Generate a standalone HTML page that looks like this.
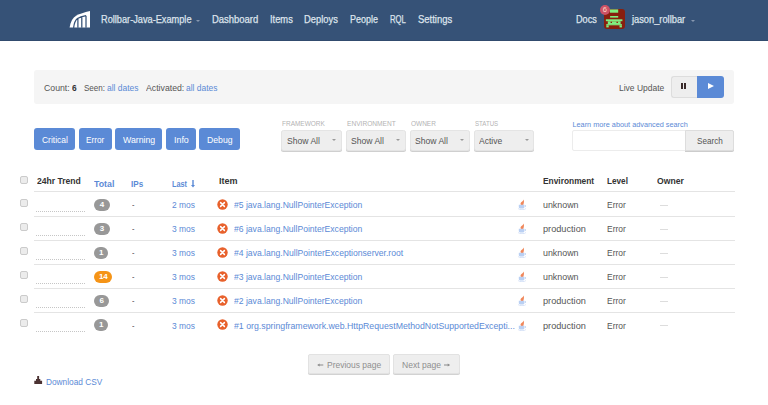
<!DOCTYPE html>
<html><head><meta charset="utf-8">
<style>
html,body{margin:0;padding:0;width:768px;height:405px;overflow:hidden;background:#fff;}
body{font-family:"Liberation Sans",sans-serif;font-size:9.5px;color:#555;position:relative;}
.t{position:absolute;white-space:nowrap;transform-origin:0 0;-webkit-text-stroke:0px;}
.nav{position:absolute;left:0;top:0;width:768px;height:40px;background:#365277;border-bottom:1px solid #314b6e;}
.caret{position:absolute;width:0;height:0;border-left:2.6px solid transparent;border-right:2.6px solid transparent;border-top:2.6px solid #8797b0;}
.bar{position:absolute;left:33.5px;top:70px;width:700.5px;height:33.7px;background:#f5f5f5;border-radius:3px;}
.btn{position:absolute;top:128.3px;height:21.3px;background:#5b8ad6;border-radius:3px;}
.dd{position:absolute;top:130px;width:60.3px;height:21px;background:#eee;border:1px solid #e4e4e4;border-radius:2.5px;box-sizing:border-box;box-shadow:0 1px 0 #cfcfcf;}
.dd i{position:absolute;left:49.5px;top:7.8px;width:0;height:0;border-left:2.6px solid transparent;border-right:2.6px solid transparent;border-top:2.6px solid #999;}
.hl{position:absolute;left:33.5px;width:701px;height:1px;background:#e4e4e4;}
.cb{position:absolute;left:20px;width:6px;height:6px;border:1px solid #cbcbcb;background:#ececec;border-radius:2px;}
.tr{position:absolute;left:36.3px;width:48.7px;height:1px;border-top:1px dotted #c6c6c6;}
.bd{position:absolute;height:11.7px;border-radius:6px;color:#fff;font-size:8px;line-height:12px;text-align:center;font-weight:bold;letter-spacing:-0.2px;}
.ei{position:absolute;left:217px;width:11px;height:11px;}
.ji{position:absolute;left:514px;width:16px;height:16px;}
.dash{position:absolute;left:660px;width:8px;height:1px;background:#ddd;}
</style></head><body>
<div class="nav"></div>
<!-- logo -->
<svg style="position:absolute;left:66px;top:8px" width="30" height="24" viewBox="0 0 30 24">
<path d="M3.6 19.6 C4.4 14 6.5 9.8 10.5 7.5 C13.5 5.8 18 4.4 24 3 L24 19.6 Z" fill="#fff"/>
<path d="M7.6 19.8 C8.2 15 9.3 12.3 11.5 10.6 C14 8.9 17 8.2 20 7.7 M20 7.7 V19.8 M15.8 8.8 V19.8 M11.9 10.8 V19.8" stroke="#365277" stroke-width="1.25" fill="none"/>
</svg>
<div class="caret" style="left:196px;top:19.5px"></div>
<div class="caret" style="left:690.5px;top:19.5px"></div>
<!-- avatar -->
<div style="position:absolute;left:604px;top:9px;width:20.5px;height:20px;background:#881f0e;border-radius:3px"></div>
<svg style="position:absolute;left:604px;top:9px" width="21" height="20" viewBox="0 0 21 20">
<g fill="#80ef80">
<rect x="6" y="0.4" width="8.2" height="3.3"/>
<rect x="6.1" y="7" width="8.1" height="1.6"/>
<rect x="1.9" y="10.3" width="16.5" height="1.9"/>
<path d="M3.8 12.2H16.6V15.1H3.8Z M6.6 12.7V14.1H8V12.7Z M12.5 12.7V14.1H13.9V12.7Z" fill-rule="evenodd"/>
<rect x="2.3" y="15.1" width="15.6" height="1.2"/>
<rect x="2.3" y="16.3" width="2.4" height="2.1"/>
<rect x="15.5" y="16.3" width="2.4" height="2.1"/>
</g>
</svg>
<div style="position:absolute;left:599.6px;top:4.9px;width:10.5px;height:10.5px;border-radius:50%;background:#cd5266;color:#fcdcc6;font-size:7.5px;line-height:10.5px;text-align:center">6</div>

<!-- count bar -->
<div class="bar"></div>
<div style="position:absolute;left:671.3px;top:76.4px;width:25.7px;height:21.4px;background:#eee;border:1px solid #ddd;border-right:none;border-radius:3px 0 0 3px;box-sizing:border-box"></div>
<div style="position:absolute;left:681.2px;top:83.2px;width:2px;height:6px;background:#3a2a2a"></div>
<div style="position:absolute;left:684.4px;top:83.2px;width:2px;height:6px;background:#3a2a2a"></div>
<div style="position:absolute;left:697px;top:76.4px;width:26.8px;height:21.4px;background:#5b8ad6;border-radius:0 3px 3px 0"></div>
<div style="position:absolute;left:708px;top:83px;width:0;height:0;border-top:3.6px solid transparent;border-bottom:3.6px solid transparent;border-left:6.8px solid #fff"></div>

<!-- level buttons -->
<div class="btn" style="left:34px;width:40.7px"></div>
<div class="btn" style="left:78.7px;width:33px"></div>
<div class="btn" style="left:115.1px;width:47.4px"></div>
<div class="btn" style="left:166px;width:29.7px"></div>
<div class="btn" style="left:199.3px;width:41px"></div>

<!-- dropdowns -->
<div class="dd" style="left:281.3px"><i></i></div>
<div class="dd" style="left:345.6px"><i></i></div>
<div class="dd" style="left:409.7px"><i></i></div>
<div class="dd" style="left:474px"><i></i></div>

<!-- search -->
<div style="position:absolute;left:572.3px;top:130.2px;width:113.5px;height:21.3px;border:1px solid #ececec;background:#fff;box-sizing:border-box;border-radius:2px 0 0 2px"></div>
<div style="position:absolute;left:685.3px;top:130.2px;width:48.7px;height:21.3px;border:1px solid #ddd;background:#eee;box-sizing:border-box;border-radius:0 2px 2px 0;box-shadow:0 1px 0 #ccc"></div>

<!-- table header -->
<div class="cb" style="top:176.2px"></div>
<svg style="position:absolute;left:190.8px;top:179.5px" width="4" height="8" viewBox="0 0 4 8"><path d="M1.3 0H2.7V5H4L2 7.6L0 5H1.3Z" fill="#5b8ad6"/></svg>
<div class="hl" style="top:191.3px"></div>
<div class="cb" style="top:198.80px"></div>
<div class="tr" style="top:210.60px"></div>
<div class="bd" style="left:93.8px;top:198.90px;width:16.2px;background:#989898">4</div>
<svg class="ei" style="top:198.90px" viewBox="0 0 11 11"><circle cx="5.5" cy="5.5" r="5.2" fill="#e8612c"/><path d="M3.6 3.6L7.4 7.4M7.4 3.6L3.6 7.4" stroke="#fff" stroke-width="1.5" stroke-linecap="round"/></svg>
<svg class="ji" style="top:197.00px" viewBox="0 0 16 16"><path d="M9.3 2.4C10 3.5 10.2 4.5 9.8 5.8C9.6 7 9.6 7.5 9.2 8L7 8C6.3 7.2 6.3 5.8 7.5 5C8.5 4.3 9.3 3.5 9.3 2.4Z" fill="#f08659"/><path d="M4.8 7.8H10.4V10C10.4 11 9.5 11.6 7.6 11.6C5.7 11.6 4.8 11 4.8 10Z M10.9 8.2h1.1v1.6h-1.1z" fill="#bad0f3"/><path d="M4 11.3C5.5 12.5 10.5 12.5 12 11.3L12 12C10.5 13 5.5 13 4 12Z" fill="#c6d7f4"/></svg>
<div class="dash" style="top:204.50px"></div>
<div class="hl" style="top:215.60px"></div>
<div class="cb" style="top:222.90px"></div>
<div class="tr" style="top:234.70px"></div>
<div class="bd" style="left:93.8px;top:223.00px;width:16.2px;background:#989898">3</div>
<svg class="ei" style="top:223.00px" viewBox="0 0 11 11"><circle cx="5.5" cy="5.5" r="5.2" fill="#e8612c"/><path d="M3.6 3.6L7.4 7.4M7.4 3.6L3.6 7.4" stroke="#fff" stroke-width="1.5" stroke-linecap="round"/></svg>
<svg class="ji" style="top:221.10px" viewBox="0 0 16 16"><path d="M9.3 2.4C10 3.5 10.2 4.5 9.8 5.8C9.6 7 9.6 7.5 9.2 8L7 8C6.3 7.2 6.3 5.8 7.5 5C8.5 4.3 9.3 3.5 9.3 2.4Z" fill="#f08659"/><path d="M4.8 7.8H10.4V10C10.4 11 9.5 11.6 7.6 11.6C5.7 11.6 4.8 11 4.8 10Z M10.9 8.2h1.1v1.6h-1.1z" fill="#bad0f3"/><path d="M4 11.3C5.5 12.5 10.5 12.5 12 11.3L12 12C10.5 13 5.5 13 4 12Z" fill="#c6d7f4"/></svg>
<div class="dash" style="top:228.60px"></div>
<div class="hl" style="top:239.70px"></div>
<div class="cb" style="top:247.00px"></div>
<div class="tr" style="top:258.80px"></div>
<div class="bd" style="left:93.8px;top:247.10px;width:14.7px;background:#989898">1</div>
<svg class="ei" style="top:247.10px" viewBox="0 0 11 11"><circle cx="5.5" cy="5.5" r="5.2" fill="#e8612c"/><path d="M3.6 3.6L7.4 7.4M7.4 3.6L3.6 7.4" stroke="#fff" stroke-width="1.5" stroke-linecap="round"/></svg>
<svg class="ji" style="top:245.20px" viewBox="0 0 16 16"><path d="M9.3 2.4C10 3.5 10.2 4.5 9.8 5.8C9.6 7 9.6 7.5 9.2 8L7 8C6.3 7.2 6.3 5.8 7.5 5C8.5 4.3 9.3 3.5 9.3 2.4Z" fill="#f08659"/><path d="M4.8 7.8H10.4V10C10.4 11 9.5 11.6 7.6 11.6C5.7 11.6 4.8 11 4.8 10Z M10.9 8.2h1.1v1.6h-1.1z" fill="#bad0f3"/><path d="M4 11.3C5.5 12.5 10.5 12.5 12 11.3L12 12C10.5 13 5.5 13 4 12Z" fill="#c6d7f4"/></svg>
<div class="dash" style="top:252.70px"></div>
<div class="hl" style="top:263.80px"></div>
<div class="cb" style="top:271.10px"></div>
<div class="tr" style="top:282.90px"></div>
<div class="bd" style="left:93.8px;top:271.20px;width:18.7px;background:#f59417">14</div>
<svg class="ei" style="top:271.20px" viewBox="0 0 11 11"><circle cx="5.5" cy="5.5" r="5.2" fill="#e8612c"/><path d="M3.6 3.6L7.4 7.4M7.4 3.6L3.6 7.4" stroke="#fff" stroke-width="1.5" stroke-linecap="round"/></svg>
<svg class="ji" style="top:269.30px" viewBox="0 0 16 16"><path d="M9.3 2.4C10 3.5 10.2 4.5 9.8 5.8C9.6 7 9.6 7.5 9.2 8L7 8C6.3 7.2 6.3 5.8 7.5 5C8.5 4.3 9.3 3.5 9.3 2.4Z" fill="#f08659"/><path d="M4.8 7.8H10.4V10C10.4 11 9.5 11.6 7.6 11.6C5.7 11.6 4.8 11 4.8 10Z M10.9 8.2h1.1v1.6h-1.1z" fill="#bad0f3"/><path d="M4 11.3C5.5 12.5 10.5 12.5 12 11.3L12 12C10.5 13 5.5 13 4 12Z" fill="#c6d7f4"/></svg>
<div class="dash" style="top:276.80px"></div>
<div class="hl" style="top:287.90px"></div>
<div class="cb" style="top:295.20px"></div>
<div class="tr" style="top:307.00px"></div>
<div class="bd" style="left:93.8px;top:295.30px;width:15.6px;background:#989898">6</div>
<svg class="ei" style="top:295.30px" viewBox="0 0 11 11"><circle cx="5.5" cy="5.5" r="5.2" fill="#e8612c"/><path d="M3.6 3.6L7.4 7.4M7.4 3.6L3.6 7.4" stroke="#fff" stroke-width="1.5" stroke-linecap="round"/></svg>
<svg class="ji" style="top:293.40px" viewBox="0 0 16 16"><path d="M9.3 2.4C10 3.5 10.2 4.5 9.8 5.8C9.6 7 9.6 7.5 9.2 8L7 8C6.3 7.2 6.3 5.8 7.5 5C8.5 4.3 9.3 3.5 9.3 2.4Z" fill="#f08659"/><path d="M4.8 7.8H10.4V10C10.4 11 9.5 11.6 7.6 11.6C5.7 11.6 4.8 11 4.8 10Z M10.9 8.2h1.1v1.6h-1.1z" fill="#bad0f3"/><path d="M4 11.3C5.5 12.5 10.5 12.5 12 11.3L12 12C10.5 13 5.5 13 4 12Z" fill="#c6d7f4"/></svg>
<div class="dash" style="top:300.90px"></div>
<div class="hl" style="top:312.00px"></div>
<div class="cb" style="top:319.30px"></div>
<div class="tr" style="top:331.10px"></div>
<div class="bd" style="left:93.8px;top:319.40px;width:14.7px;background:#989898">1</div>
<svg class="ei" style="top:319.40px" viewBox="0 0 11 11"><circle cx="5.5" cy="5.5" r="5.2" fill="#e8612c"/><path d="M3.6 3.6L7.4 7.4M7.4 3.6L3.6 7.4" stroke="#fff" stroke-width="1.5" stroke-linecap="round"/></svg>
<svg class="ji" style="top:317.50px" viewBox="0 0 16 16"><path d="M9.3 2.4C10 3.5 10.2 4.5 9.8 5.8C9.6 7 9.6 7.5 9.2 8L7 8C6.3 7.2 6.3 5.8 7.5 5C8.5 4.3 9.3 3.5 9.3 2.4Z" fill="#f08659"/><path d="M4.8 7.8H10.4V10C10.4 11 9.5 11.6 7.6 11.6C5.7 11.6 4.8 11 4.8 10Z M10.9 8.2h1.1v1.6h-1.1z" fill="#bad0f3"/><path d="M4 11.3C5.5 12.5 10.5 12.5 12 11.3L12 12C10.5 13 5.5 13 4 12Z" fill="#c6d7f4"/></svg>
<div class="dash" style="top:325.00px"></div>

<!-- pagination -->
<div style="position:absolute;left:308.4px;top:354.2px;width:81.2px;height:20px;background:#eee;border:1px solid #e2e2e2;box-sizing:border-box;border-radius:2px;box-shadow:0 1px 0 #d2d2d2"></div>
<svg style="position:absolute;left:317px;top:362.4px" width="7" height="6" viewBox="0 0 7 6"><path d="M0.2 3L2.6 1.5V2.5H6.3V3.5H2.6V4.5Z" fill="#8a8a8a"/></svg>
<div style="position:absolute;left:393px;top:354.2px;width:66.8px;height:20px;background:#eee;border:1px solid #e2e2e2;box-sizing:border-box;border-radius:2px;box-shadow:0 1px 0 #d2d2d2"></div>
<svg style="position:absolute;left:444.2px;top:362.2px" width="7" height="6" viewBox="0 0 7 6"><path d="M6.1 3L3.7 1.5V2.5H0V3.5H3.7V4.5Z" fill="#8a8a8a"/></svg>

<!-- download -->
<svg style="position:absolute;left:34px;top:375px" width="9" height="10" viewBox="0 0 9 10"><path d="M3.2 0.9H5.1V3.9H6.3V5.7H2V3.9H3.2Z M0.3 5.8H8.1V8.9H0.3Z" fill="#4b3232"/></svg>
<span class="t" style="left:100.70px;top:13.73px;font-size:10px;line-height:12px;color:#dde3ec;transform:scaleX(0.920);-webkit-text-stroke:0.25px;">Rollbar-Java-Example</span>
<span class="t" style="left:212.40px;top:13.73px;font-size:10px;line-height:12px;color:#dde3ec;transform:scaleX(0.945);-webkit-text-stroke:0.25px;">Dashboard</span>
<span class="t" style="left:270.00px;top:13.73px;font-size:10px;line-height:12px;color:#dde3ec;transform:scaleX(0.933);-webkit-text-stroke:0.25px;">Items</span>
<span class="t" style="left:304.20px;top:13.73px;font-size:10px;line-height:12px;color:#dde3ec;transform:scaleX(0.936);-webkit-text-stroke:0.25px;">Deploys</span>
<span class="t" style="left:349.50px;top:13.73px;font-size:10px;line-height:12px;color:#dde3ec;transform:scaleX(0.896);-webkit-text-stroke:0.25px;">People</span>
<span class="t" style="left:389.50px;top:13.73px;font-size:10px;line-height:12px;color:#dde3ec;transform:scaleX(0.771);-webkit-text-stroke:0.25px;">RQL</span>
<span class="t" style="left:417.80px;top:13.73px;font-size:10px;line-height:12px;color:#dde3ec;transform:scaleX(0.947);-webkit-text-stroke:0.25px;">Settings</span>
<span class="t" style="left:576.00px;top:13.73px;font-size:10px;line-height:12px;color:#dde3ec;transform:scaleX(0.913);-webkit-text-stroke:0.25px;">Docs</span>
<span class="t" style="left:632.33px;top:13.73px;font-size:10px;line-height:12px;color:#dde3ec;transform:scaleX(0.928);-webkit-text-stroke:0.25px;">jason_rollbar</span>
<span class="t" style="left:43.90px;top:81.91px;font-size:9.5px;line-height:11px;color:#555;transform:scaleX(0.918);">Count:</span>
<span class="t" style="left:71.90px;top:81.91px;font-size:9.5px;line-height:11px;color:#333;font-weight:bold;transform:scaleX(0.880);">6</span>
<span class="t" style="left:83.80px;top:81.91px;font-size:9.5px;line-height:11px;color:#555;transform:scaleX(0.848);">Seen:</span>
<span class="t" style="left:106.50px;top:81.91px;font-size:9.5px;line-height:11px;color:#5b8ad6;transform:scaleX(0.890);">all dates</span>
<span class="t" style="left:145.50px;top:81.91px;font-size:9.5px;line-height:11px;color:#555;transform:scaleX(0.918);">Activated:</span>
<span class="t" style="left:185.90px;top:81.91px;font-size:9.5px;line-height:11px;color:#5b8ad6;transform:scaleX(0.887);">all dates</span>
<span class="t" style="left:618.60px;top:82.01px;font-size:9.5px;line-height:11px;color:#555;transform:scaleX(0.893);">Live Update</span>
<span class="t" style="left:41.50px;top:133.91px;font-size:9.5px;line-height:11px;color:#fff;transform:scaleX(0.889);">Critical</span>
<span class="t" style="left:86.00px;top:133.91px;font-size:9.5px;line-height:11px;color:#fff;transform:scaleX(0.864);">Error</span>
<span class="t" style="left:122.90px;top:133.91px;font-size:9.5px;line-height:11px;color:#fff;transform:scaleX(0.918);">Warning</span>
<span class="t" style="left:173.70px;top:133.91px;font-size:9.5px;line-height:11px;color:#fff;transform:scaleX(0.932);">Info</span>
<span class="t" style="left:207.20px;top:133.91px;font-size:9.5px;line-height:11px;color:#fff;transform:scaleX(0.913);">Debug</span>
<span class="t" style="left:282.30px;top:119.77px;font-size:7px;line-height:8px;color:#b3b3b3;transform:scaleX(0.925);">FRAMEWORK</span>
<span class="t" style="left:346.50px;top:119.77px;font-size:7px;line-height:8px;color:#b3b3b3;transform:scaleX(0.944);">ENVIRONMENT</span>
<span class="t" style="left:410.60px;top:119.77px;font-size:7px;line-height:8px;color:#b3b3b3;transform:scaleX(0.926);">OWNER</span>
<span class="t" style="left:474.80px;top:119.77px;font-size:7px;line-height:8px;color:#b3b3b3;transform:scaleX(0.870);">STATUS</span>
<span class="t" style="left:286.90px;top:135.01px;font-size:9.5px;line-height:11px;color:#555;transform:scaleX(0.904);">Show All</span>
<span class="t" style="left:351.10px;top:135.01px;font-size:9.5px;line-height:11px;color:#555;transform:scaleX(0.904);">Show All</span>
<span class="t" style="left:415.30px;top:135.01px;font-size:9.5px;line-height:11px;color:#555;transform:scaleX(0.904);">Show All</span>
<span class="t" style="left:479.10px;top:135.01px;font-size:9.5px;line-height:11px;color:#555;transform:scaleX(0.899);">Active</span>
<span class="t" style="left:572.50px;top:119.77px;font-size:7.3px;line-height:9px;color:#5b8ad6;">Learn more about advanced search</span>
<span class="t" style="left:696.70px;top:135.11px;font-size:9.5px;line-height:11px;color:#555;transform:scaleX(0.855);">Search</span>
<span class="t" style="left:36.90px;top:174.81px;font-size:9.5px;line-height:11px;color:#333;font-weight:bold;transform:scaleX(0.902);">24hr Trend</span>
<span class="t" style="left:218.75px;top:174.81px;font-size:9.5px;line-height:11px;color:#333;font-weight:bold;transform:scaleX(0.948);">Item</span>
<span class="t" style="left:542.90px;top:174.81px;font-size:9.5px;line-height:11px;color:#333;font-weight:bold;transform:scaleX(0.881);">Environment</span>
<span class="t" style="left:606.60px;top:174.81px;font-size:9.5px;line-height:11px;color:#333;font-weight:bold;transform:scaleX(0.862);">Level</span>
<span class="t" style="left:656.60px;top:174.81px;font-size:9.5px;line-height:11px;color:#333;font-weight:bold;transform:scaleX(0.907);">Owner</span>
<span class="t" style="left:94.40px;top:178.01px;font-size:9.5px;line-height:11px;color:#5b8ad6;font-weight:bold;transform:scaleX(0.927);">Total</span>
<span class="t" style="left:131.25px;top:178.01px;font-size:9.5px;line-height:11px;color:#5b8ad6;font-weight:bold;transform:scaleX(0.851);">IPs</span>
<span class="t" style="left:172.00px;top:178.01px;font-size:9.5px;line-height:11px;color:#5b8ad6;font-weight:bold;transform:scaleX(0.771);">Last</span>
<span class="t" style="left:132.20px;top:199.01px;font-size:9.5px;line-height:11px;color:#555;transform:scaleX(0.800);">-</span>
<span class="t" style="left:171.50px;top:199.01px;font-size:9.5px;line-height:11px;color:#5b8ad6;transform:scaleX(0.888);">2 mos</span>
<span class="t" style="left:233.75px;top:199.01px;font-size:9.5px;line-height:11px;color:#5b8ad6;transform:scaleX(0.903);">#5 java.lang.NullPointerException</span>
<span class="t" style="left:542.50px;top:199.01px;font-size:9.5px;line-height:11px;color:#555;transform:scaleX(0.933);">unknown</span>
<span class="t" style="left:607.00px;top:199.01px;font-size:9.5px;line-height:11px;color:#555;transform:scaleX(0.888);">Error</span>
<span class="t" style="left:132.20px;top:223.11px;font-size:9.5px;line-height:11px;color:#555;transform:scaleX(0.800);">-</span>
<span class="t" style="left:171.50px;top:223.11px;font-size:9.5px;line-height:11px;color:#5b8ad6;transform:scaleX(0.888);">3 mos</span>
<span class="t" style="left:233.75px;top:223.11px;font-size:9.5px;line-height:11px;color:#5b8ad6;transform:scaleX(0.903);">#6 java.lang.NullPointerException</span>
<span class="t" style="left:542.50px;top:223.11px;font-size:9.5px;line-height:11px;color:#555;transform:scaleX(0.966);">production</span>
<span class="t" style="left:607.00px;top:223.11px;font-size:9.5px;line-height:11px;color:#555;transform:scaleX(0.888);">Error</span>
<span class="t" style="left:132.20px;top:247.21px;font-size:9.5px;line-height:11px;color:#555;transform:scaleX(0.800);">-</span>
<span class="t" style="left:171.50px;top:247.21px;font-size:9.5px;line-height:11px;color:#5b8ad6;transform:scaleX(0.888);">3 mos</span>
<span class="t" style="left:233.75px;top:247.21px;font-size:9.5px;line-height:11px;color:#5b8ad6;transform:scaleX(0.905);">#4 java.lang.NullPointerExceptionserver.root</span>
<span class="t" style="left:542.50px;top:247.21px;font-size:9.5px;line-height:11px;color:#555;transform:scaleX(0.933);">unknown</span>
<span class="t" style="left:607.00px;top:247.21px;font-size:9.5px;line-height:11px;color:#555;transform:scaleX(0.888);">Error</span>
<span class="t" style="left:132.20px;top:271.31px;font-size:9.5px;line-height:11px;color:#555;transform:scaleX(0.800);">-</span>
<span class="t" style="left:171.50px;top:271.31px;font-size:9.5px;line-height:11px;color:#5b8ad6;transform:scaleX(0.888);">3 mos</span>
<span class="t" style="left:233.75px;top:271.31px;font-size:9.5px;line-height:11px;color:#5b8ad6;transform:scaleX(0.903);">#3 java.lang.NullPointerException</span>
<span class="t" style="left:542.50px;top:271.31px;font-size:9.5px;line-height:11px;color:#555;transform:scaleX(0.933);">unknown</span>
<span class="t" style="left:607.00px;top:271.31px;font-size:9.5px;line-height:11px;color:#555;transform:scaleX(0.888);">Error</span>
<span class="t" style="left:132.20px;top:295.41px;font-size:9.5px;line-height:11px;color:#555;transform:scaleX(0.800);">-</span>
<span class="t" style="left:171.50px;top:295.41px;font-size:9.5px;line-height:11px;color:#5b8ad6;transform:scaleX(0.888);">3 mos</span>
<span class="t" style="left:233.75px;top:295.41px;font-size:9.5px;line-height:11px;color:#5b8ad6;transform:scaleX(0.903);">#2 java.lang.NullPointerException</span>
<span class="t" style="left:542.50px;top:295.41px;font-size:9.5px;line-height:11px;color:#555;transform:scaleX(0.966);">production</span>
<span class="t" style="left:607.00px;top:295.41px;font-size:9.5px;line-height:11px;color:#555;transform:scaleX(0.888);">Error</span>
<span class="t" style="left:132.20px;top:319.51px;font-size:9.5px;line-height:11px;color:#555;transform:scaleX(0.800);">-</span>
<span class="t" style="left:171.50px;top:319.51px;font-size:9.5px;line-height:11px;color:#5b8ad6;transform:scaleX(0.888);">3 mos</span>
<span class="t" style="left:233.75px;top:319.51px;font-size:9.5px;line-height:11px;color:#5b8ad6;transform:scaleX(0.922);">#1 org.springframework.web.HttpRequestMethodNotSupportedExcepti...</span>
<span class="t" style="left:542.50px;top:319.51px;font-size:9.5px;line-height:11px;color:#555;transform:scaleX(0.966);">production</span>
<span class="t" style="left:607.00px;top:319.51px;font-size:9.5px;line-height:11px;color:#555;transform:scaleX(0.888);">Error</span>
<span class="t" style="left:327.10px;top:359.88px;font-size:9px;line-height:11px;color:#8f8f8f;transform:scaleX(0.940);">Previous page</span>
<span class="t" style="left:401.90px;top:359.88px;font-size:9px;line-height:11px;color:#8f8f8f;transform:scaleX(0.948);">Next page</span>
<span class="t" style="left:46.10px;top:375.61px;font-size:9.5px;line-height:11px;color:#5b8ad6;transform:scaleX(0.873);">Download CSV</span>
</body></html>
